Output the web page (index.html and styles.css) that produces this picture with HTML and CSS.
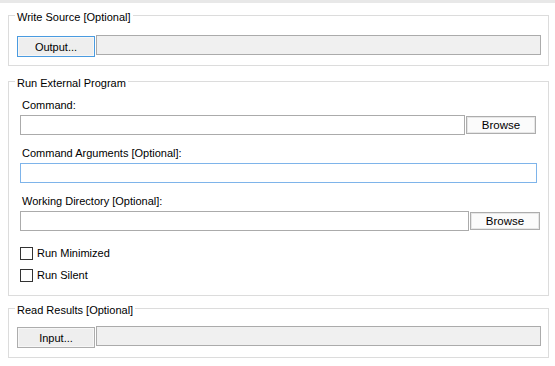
FILE: index.html
```html
<!DOCTYPE html>
<html>
<head>
<meta charset="utf-8">
<link rel="stylesheet" href="styles.css">
</head>
<body>
<div class="topbar"></div>
<div class="page">
  <fieldset class="group g1">
    <legend>Write Source [Optional]</legend>
    <div class="row">
      <button class="btn btn-wide btn-focus">Output...</button>
      <input class="tb tb-ro" type="text" readonly>
    </div>
  </fieldset>

  <fieldset class="group g2">
    <legend>Run External Program</legend>
    <label class="lbl">Command:</label>
    <div class="row">
      <input class="tb tb-cmd" type="text">
      <button class="btn btn-browse">Browse</button>
    </div>
    <label class="lbl lbl-gap">Command Arguments [Optional]:</label>
    <div class="row">
      <input class="tb tb-args tb-focus" type="text">
    </div>
    <label class="lbl lbl-gap">Working Directory [Optional]:</label>
    <div class="row">
      <input class="tb tb-work" type="text">
      <button class="btn btn-browse">Browse</button>
    </div>
    <div class="checks">
      <label class="chk"><input type="checkbox" class="cb"><span>Run Minimized</span></label>
      <label class="chk"><input type="checkbox" class="cb"><span>Run Silent</span></label>
    </div>
  </fieldset>

  <fieldset class="group g3">
    <legend>Read Results [Optional]</legend>
    <div class="row">
      <button class="btn btn-wide">Input...</button>
      <input class="tb tb-ro" type="text" readonly>
    </div>
  </fieldset>
</div>
</body>
</html>
```

FILE: styles.css
```css
* { box-sizing: border-box; }
html, body {
  margin: 0;
  padding: 0;
  background: #ffffff;
  font-family: "Liberation Sans", Arial, sans-serif;
  font-size: 11px;
  color: #000;
}
.topbar {
  height: 3px;
  background: #e8e8e8;
}
.page {
  padding: 3px 0 0 8px;
}
.group {
  width: 541px;
  margin: 0;
  border: 1px solid #dcdcdc;
  min-width: 0;
}
.group legend {
  margin-left: -2px;
  padding: 4px 2px 0 2px;
  line-height: 14px;
}
.g1 { padding: 11px 7px 8px 8px; }
.g2 { margin-top: 6px; padding: 9px 7px 13px 11px; }
.g2 legend { margin-left: -5px; }
.g3 { margin-top: 3px; padding: 9px 7px 9px 8px; }

.row {
  display: flex;
  align-items: flex-start;
  gap: 1px;
}
.lbl {
  display: block;
  line-height: 13px;
  margin: 0 0 3px 2px;
}
.lbl-gap { margin-top: 12px; }

.tb {
  display: block;
  height: 20px;
  margin: 0;
  padding: 0 3px;
  border: 1px solid #ababab;
  background: #fff;
  font: inherit;
  outline: none;
}
.tb-ro {
  width: 445px;
  background: #f0f0f0;
}
.tb-cmd { width: 445px; }
.tb-args { width: 517px; }
.tb-work { width: 449px; }
.tb-focus { border-color: #7eb4ea; }

.btn {
  display: block;
  margin: 1px 0 0 0;
  padding: 0;
  font: inherit;
  color: #000;
  border: 1px solid #adadad;
  background: #fbfbfb;
  box-shadow: inset 0 0 0 1px #e6e6e6;
  border-radius: 0;
}
.btn-wide {
  width: 78px;
  height: 21px;
  background: #eeeeee;
  box-shadow: inset 0 0 0 1px #f7f7f7;
}
.btn-focus { border-color: #4a9be0; }
.btn-browse {
  width: 70px;
  height: 18px;
  font-size: 11.5px;
}

.checks {
  margin-top: 16px;
  display: flex;
  flex-direction: column;
  gap: 9px;
}
.chk {
  display: flex;
  align-items: center;
  gap: 4px;
  height: 13px;
  line-height: 13px;
}
.cb {
  appearance: none;
  -webkit-appearance: none;
  width: 13px;
  height: 13px;
  margin: 0;
  border: 1px solid #333333;
  background: #fff;
}
```
